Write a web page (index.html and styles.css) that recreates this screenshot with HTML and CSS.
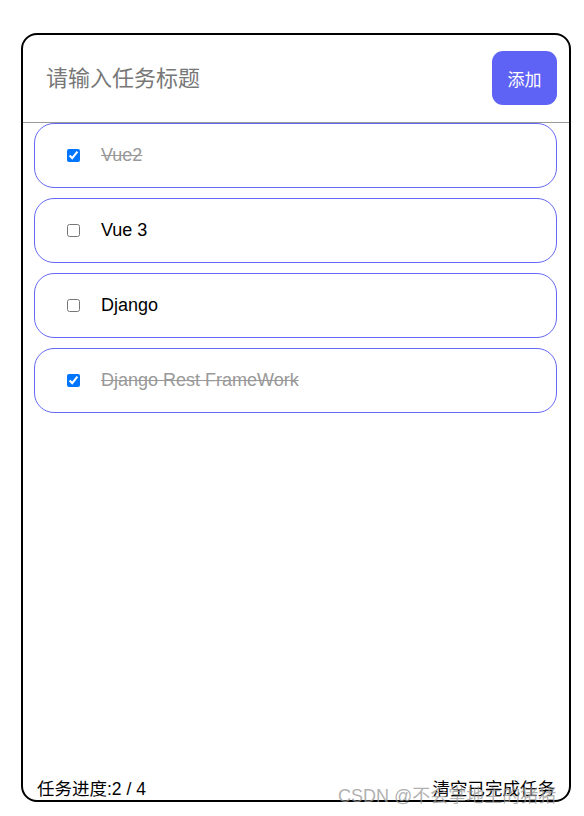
FILE: index.html
```html
<!DOCTYPE html>
<html lang="zh">
<head>
<meta charset="utf-8">
<title>Todo</title>
<link rel="stylesheet" href="styles.css">
</head>
<body>
<div class="app">
  <div class="header">
    <input class="title-input" type="text" placeholder="请输入任务标题">
    <button class="add-btn">添加</button>
  </div>
  <ul class="list">
    <li class="item done"><input type="checkbox" checked><span class="label">Vue2</span></li>
    <li class="item"><input type="checkbox"><span class="label">Vue 3</span></li>
    <li class="item"><input type="checkbox"><span class="label">Django</span></li>
    <li class="item done"><input type="checkbox" checked><span class="label">Django Rest FrameWork</span></li>
  </ul>
  <div class="footer">
    <span class="progress">任务进度:2 / 4</span>
    <span class="clear">清空已完成任务</span>
  </div>
</div>
<div class="watermark">CSDN @不会掌地主的猪猪</div>
</body>
</html>
```
FILE: styles.css
```css
html, body {
  margin: 0;
  padding: 0;
  background: #fff;
}
body {
  padding: 33px 0 0 21px;
  font-family: "Liberation Sans", "Noto Sans CJK SC", sans-serif;
  position: relative;
  min-height: 816px;
  box-sizing: border-box;
}
.app {
  width: 550px;
  height: 769px;
  box-sizing: border-box;
  border: 2px solid #000;
  border-radius: 16px;
  display: flex;
  flex-direction: column;
}
.header {
  height: 88px;
  box-sizing: border-box;
  border-bottom: 1px solid #999;
  display: flex;
  align-items: center;
  padding: 0 12px 0 23px;
  gap: 10px;
}
.title-input {
  flex: 1;
  border: none;
  outline: none;
  font-size: 22px;
  font-family: "Liberation Sans", "Noto Sans CJK SC", sans-serif;
  color: #333;
  padding: 0;
  background: transparent;
}
.title-input::placeholder {
  color: #777;
}
.add-btn {
  width: 65px;
  height: 54px;
  border: none;
  border-radius: 11px;
  background: #5f63f5;
  color: #fff;
  font-size: 17px;
  font-family: "Liberation Sans", "Noto Sans CJK SC", sans-serif;
  margin-top: -1px;
}
.list {
  list-style: none;
  margin: 0;
  padding: 0 12px 0 11px;
  flex: 1;
  display: flex;
  flex-direction: column;
  gap: 10px;
}
.item {
  height: 65px;
  box-sizing: border-box;
  border: 1px solid #6468f3;
  border-radius: 20px;
  display: flex;
  align-items: center;
  padding-left: 29px;
  font-size: 18px;
  color: #000;
}
.item input {
  width: 13px;
  height: 13px;
  margin: 0 21px 0 3px;
}
.item.done .label {
  color: #999;
  text-decoration: line-through;
}
.footer {
  display: flex;
  justify-content: space-between;
  align-items: flex-end;
  padding: 0 14px 1px 14px;
  font-size: 17.5px;
  line-height: 20px;
  color: #000;
}
.watermark {
  position: absolute;
  left: 338px;
  top: 786px;
  font-size: 18px;
  line-height: 21px;
  color: rgba(150, 150, 150, 0.75);
  white-space: nowrap;
}
```
